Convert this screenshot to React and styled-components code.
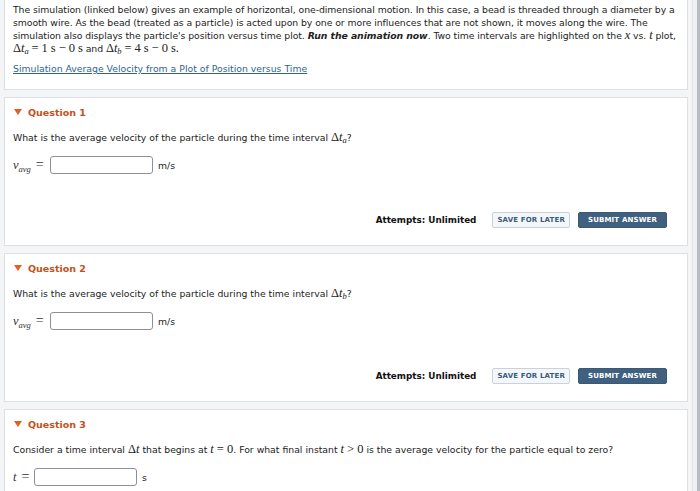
import React from "react";
import styled, { createGlobalStyle } from "styled-components";

const Global = createGlobalStyle`
  html, body {
    margin: 0;
    padding: 0;
    background: #f4f5f7;
  }
  body {
    font-family: "DejaVu Sans", Verdana, sans-serif;
    color: #222;
  }
`;

const Page = styled.div`
  display: flex;
  width: 700px;
  height: 491px;
  overflow: hidden;
`;

const Column = styled.div`
  flex: 1;
  display: flex;
  flex-direction: column;
  gap: 7px;
  padding: 0 4px 0 4px;
`;

const ScrollTrack = styled.div`
  width: 7px;
  background: #f0f1f3;
  border-left: 1px solid #e2e4e8;
  display: flex;
  justify-content: flex-end;
`;

const ScrollThumb = styled.div`
  width: 3px;
  background: #b9bcc2;
`;

const Panel = styled.div`
  background: #fff;
  border: 1px solid #dde0e5;
  border-top: ${({ $first }) => ($first ? "none" : "1px solid #dde0e5")};
  padding: ${({ $first }) => ($first ? "3px 9px 0 8px" : "8px 9px 0 8px")};
  height: ${({ $h }) => $h}px;
  box-sizing: border-box;
  flex-shrink: 0;
`;

const Para = styled.p`
  margin: 0;
  font-size: 9.3px;
  line-height: 13px;
  white-space: nowrap;
  letter-spacing: -0.06px;
`;

const M = styled.span`
  font-family: "Liberation Serif", "Times New Roman", serif;
  font-size: 12.5px;
  font-style: ${({ $up }) => ($up ? "normal" : "italic")};
`;

const Sub = styled.sub`
  font-family: "Liberation Serif", "Times New Roman", serif;
  font-style: italic;
  font-size: 8.5px;
  vertical-align: -2px;
  line-height: 0;
`;

const Link = styled.a`
  display: inline-block;
  margin-top: 8px;
  font-size: 9.3px;
  color: #2f6391;
  text-decoration: underline;
  text-underline-offset: 1px;
`;

const QHead = styled.div`
  display: flex;
  align-items: center;
  gap: 6px;
  color: #c4501a;
  font-weight: bold;
  font-size: 9.5px;
  height: 12px;
`;

const Caret = styled.span`
  width: 0;
  height: 0;
  border-left: 4.5px solid transparent;
  border-right: 4.5px solid transparent;
  border-top: 6px solid #e2601f;
  margin-left: 1px;
`;

const QText = styled.div`
  margin-top: 13px;
  font-size: 9.3px;
  line-height: 13px;
  white-space: nowrap;
`;

const AnswerRow = styled.div`
  display: flex;
  align-items: center;
  margin-top: 11px;
  height: 20px;
`;

const Label = styled.span`
  font-family: "Liberation Serif", "Times New Roman", serif;
  font-style: italic;
  font-size: 12.5px;
  color: #333;
  width: ${({ $w }) => $w}px;
  display: inline-flex;
  align-items: baseline;
`;

const LabelSub = styled.span`
  font-size: 8.5px;
  position: relative;
  top: 3px;
`;

const Eq = styled.span`
  font-style: normal;
  margin-left: 5px;
  font-size: 14px;
`;

const Input = styled.input`
  width: ${({ $w }) => $w}px;
  height: 18px;
  box-sizing: border-box;
  border: 1px solid #8d9096;
  border-radius: 3px;
  padding: 0;
  margin: 0;
  background: #fff;
`;

const Unit = styled.span`
  font-size: 9.3px;
  margin-left: 5px;
`;

const ActionRow = styled.div`
  display: flex;
  justify-content: flex-end;
  align-items: center;
  margin-top: 37px;
  padding-right: 11px;
`;

const Attempts = styled.span`
  font-size: 8.8px;
  font-weight: bold;
  color: #111;
  margin-right: 16px;
`;

const Btn = styled.button`
  font-family: "DejaVu Sans", Verdana, sans-serif;
  font-size: 7px;
  font-weight: bold;
  letter-spacing: 0.15px;
  height: 16px;
  padding: 0 ${({ $pad }) => $pad}px;
  border-radius: 2px;
  cursor: pointer;
  border: 1px solid ${({ $primary }) => ($primary ? "#3b5877" : "#c9d1db")};
  background: ${({ $primary }) => ($primary ? "#40607f" : "#f4f7fa")};
  color: ${({ $primary }) => ($primary ? "#fff" : "#3a5a7c")};
  margin-left: ${({ $gap }) => $gap}px;
`;

const Dt = ({ s }) => (
  <>
    <M $up>Δ</M>
    <M>t</M>
    {s && <Sub>{s}</Sub>}
  </>
);

const Question = ({ n, text, label, labelSub, unit, inputW, labelW, h, actions }) => (
  <Panel $h={h}>
    <QHead>
      <Caret />
      Question {n}
    </QHead>
    <QText>{text}</QText>
    <AnswerRow>
      <Label $w={labelW}>
        {label}
        {labelSub && <LabelSub>{labelSub}</LabelSub>}
        <Eq>=</Eq>
      </Label>
      <Input $w={inputW} />
      <Unit>{unit}</Unit>
    </AnswerRow>
    {actions && (
      <ActionRow>
        <Attempts>Attempts: Unlimited</Attempts>
        <Btn $pad={4} $gap={0}>SAVE FOR LATER</Btn>
        <Btn $primary $pad={9} $gap={8}>SUBMIT ANSWER</Btn>
      </ActionRow>
    )}
  </Panel>
);

export default function App() {
  return (
    <Page>
      <Global />
      <Column>
        <Panel $first $h={90}>
          <Para>
            The simulation (linked below) gives an example of horizontal, one-dimensional motion. In this case, a bead is threaded through a diameter by a
            <br />
            smooth wire. As the bead (treated as a particle) is acted upon by one or more influences that are not shown, it moves along the wire. The
            <br />
            simulation also displays the particle's position versus time plot. <b><i>Run the animation now</i></b>. Two time intervals are highlighted on the <M>x</M> vs. <M>t</M> plot,
            <br />
            <Dt s="a" /> <M $up>= 1 s − 0 s</M> and <Dt s="b" /> <M $up>= 4 s − 0 s.</M>
          </Para>
          <Link href="#">Simulation Average Velocity from a Plot of Position versus Time</Link>
        </Panel>
        <Question
          n={1}
          h={149}
          text={<>What is the average velocity of the particle during the time interval <Dt s="a" />?</>}
          label="v"
          labelSub="avg"
          labelW={37}
          inputW={103}
          unit="m/s"
          actions
        />
        <Question
          n={2}
          h={149}
          text={<>What is the average velocity of the particle during the time interval <Dt s="b" />?</>}
          label="v"
          labelSub="avg"
          labelW={37}
          inputW={103}
          unit="m/s"
          actions
        />
        <Question
          n={3}
          h={120}
          text={<>Consider a time interval <Dt /> that begins at <M>t</M> <M $up>= 0</M>. For what final instant <M>t</M> <M $up>&gt; 0</M> is the average velocity for the particle equal to zero?</>}
          label="t"
          labelW={21}
          inputW={103}
          unit="s"
        />
      </Column>
      <ScrollTrack>
        <ScrollThumb />
      </ScrollTrack>
    </Page>
  );
}
